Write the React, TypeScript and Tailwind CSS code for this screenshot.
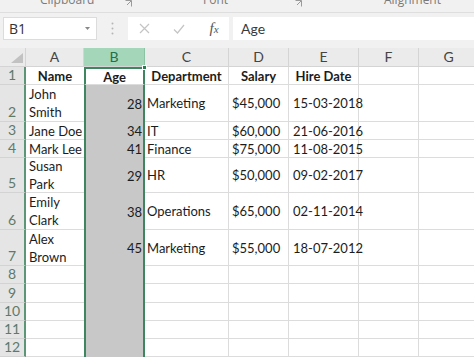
import React from "react";

const rowH = [
  "h-[18px]",
  "h-[37px]",
  "h-[18px]",
  "h-[18px]",
  "h-[35px]",
  "h-[37px]",
  "h-[36px]",
  "h-[18px]",
  "h-[19px]",
  "h-[18px]",
  "h-[18px]",
  "h-[18px]",
];

type Row = { a: string[]; b: string; c: string; d: string; e: string };
const data: Row[] = [
  { a: ["Name"], b: "Age", c: "Department", d: "Salary", e: "Hire Date" },
  { a: ["John", "Smith"], b: "28", c: "Marketing", d: "$45,000", e: "15-03-2018" },
  { a: ["Jane Doe"], b: "34", c: "IT", d: "$60,000", e: "21-06-2016" },
  { a: ["Mark Lee"], b: "41", c: "Finance", d: "$75,000", e: "11-08-2015" },
  { a: ["Susan", "Park"], b: "29", c: "HR", d: "$50,000", e: "09-02-2017" },
  { a: ["Emily", "Clark"], b: "38", c: "Operations", d: "$65,000", e: "02-11-2014" },
  { a: ["Alex", "Brown"], b: "45", c: "Marketing", d: "$55,000", e: "18-07-2012" },
];

function Launcher() {
  return (
    <svg width="7" height="7" viewBox="0 0 7 7" className="block">
      <path d="M0.5 0.5 H6.5 V6.5" fill="none" stroke="#9a9a9a" strokeWidth="1" />
      <path d="M2 5 L6 1" stroke="#9a9a9a" strokeWidth="1" />
    </svg>
  );
}

export default function App() {
  const rows = Array.from({ length: 12 }, (_, i) => i);
  return (
    <div className="w-[474px] h-[357px] overflow-hidden bg-[#f1f1f1] font-['Lato',sans-serif] text-[#1c1c1c]">
      {/* Ribbon group labels (clipped at the top as in the screenshot) */}
      <div className="h-[13px] flex items-end overflow-hidden border-b border-[#dedede] text-[12px] leading-[16px] text-[#7a7a7a] font-['Open_Sans',sans-serif]">
        <div className="w-[125px] shrink-0 pl-[40px] -translate-y-[4px]">Clipboard</div>
        <div className="w-[78px] shrink-0 pb-[5px]">
          <Launcher />
        </div>
        <div className="w-[92px] shrink-0 -translate-y-[4px]">Font</div>
        <div className="w-[89px] shrink-0 pb-[5px]">
          <Launcher />
        </div>
        <div className="shrink-0 -translate-y-[4px]">Alignment</div>
      </div>

      {/* Formula bar */}
      <div className="h-[35px] pt-[4px] flex items-start">
        <div className="ml-[3px] w-[94px] h-[23px] shrink-0 bg-white border border-[#dcdcdc] flex items-center justify-between pl-[5px] pr-[6px] text-[14px] text-[#333] font-['Open_Sans',sans-serif]">
          <span className="leading-none">B1</span>
          <svg width="5" height="3" viewBox="0 0 5 3">
            <path d="M0 0 H5 L2.5 3 Z" fill="#888" />
          </svg>
        </div>
        <div className="w-[31px] h-[23px] shrink-0 flex items-center justify-center">
          <svg width="3" height="13" viewBox="0 0 3 13">
            <circle cx="1.5" cy="1.5" r="1" fill="#b5b5b5" />
            <circle cx="1.5" cy="6.5" r="1" fill="#b5b5b5" />
            <circle cx="1.5" cy="11.5" r="1" fill="#b5b5b5" />
          </svg>
        </div>
        <div className="w-[101px] h-[23px] shrink-0 bg-white flex items-center">
          <div className="w-[30px] flex justify-center pl-[2px]">
            <svg width="11" height="11" viewBox="0 0 11 11">
              <path d="M1 1 L10 10 M10 1 L1 10" stroke="#c4c4c4" strokeWidth="1.2" />
            </svg>
          </div>
          <div className="w-[38px] flex justify-center pl-[4px]">
            <svg width="12" height="10" viewBox="0 0 12 10">
              <path d="M1 5.5 L4.5 9 L11 1" fill="none" stroke="#c4c4c4" strokeWidth="1.2" />
            </svg>
          </div>
          <div className="w-[30px] flex justify-center pl-[6px] font-['Liberation_Serif',serif] italic text-[#555] text-[15px] leading-none">
            <span>
              f<span className="text-[11px]">x</span>
            </span>
          </div>
        </div>
        <div className="w-[4px] shrink-0" />
        <div className="flex-1 h-[23px] bg-white flex items-center pl-[8px] text-[14px] text-[#3a3a3a]">Age</div>
      </div>

      {/* Column headers */}
      <div className="h-[19px] flex bg-[#ebebeb] border-b border-[#d4d4d4] text-[14px] text-[#444] leading-[18px]">
        <div className="w-[26px] shrink-0 relative border-r border-[#d4d4d4] flex items-end justify-end pr-[2px] pb-[3px]">
          <svg width="12" height="10" viewBox="0 0 12 10">
            <path d="M12 0 L12 10 L0 10 Z" fill="#c2c2c2" />
          </svg>
        </div>
        <div className="w-[58px] shrink-0 border-r border-[#d4d4d4] flex items-center justify-center">A</div>
        <div className="w-[61px] shrink-0 bg-[#a4d7ba] text-[#23704a] border-r border-[#8cc3a4] flex items-center justify-center">B</div>
        <div className="w-[84px] shrink-0 border-r border-[#d4d4d4] flex items-center justify-center">C</div>
        <div className="w-[60px] shrink-0 border-r border-[#d4d4d4] flex items-center justify-center">D</div>
        <div className="w-[70px] shrink-0 border-r border-[#d4d4d4] flex items-center justify-center">E</div>
        <div className="w-[60px] shrink-0 border-r border-[#d4d4d4] flex items-center justify-center">F</div>
        <div className="w-[60px] shrink-0 border-r border-[#d4d4d4] flex items-center justify-center">G</div>
      </div>

      {/* Rows */}
      <div className="bg-white text-[13px] leading-[18px]">
        {rows.map((i) => {
          const r = data[i];
          const header = i === 0;
          const bold = header ? "font-bold" : "";
          return (
            <div key={i} className={`flex ${rowH[i]}`}>
              <div className="w-[26px] shrink-0 bg-[#e5e5e5] border-r-2 border-r-[#5d9676] border-b border-b-[#d3d3d3] flex items-end justify-center text-[14px] text-[#5e7a69]">
                {i + 1}
              </div>
              {/* A */}
              <div className={`w-[58px] shrink-0 border-b border-[#dcdcdc] flex flex-col justify-center ${header ? "items-center" : "pl-[3px]"} ${bold} whitespace-nowrap`}>
                {r ? r.a.map((t) => <div key={t}>{t}</div>) : null}
              </div>
              {/* B */}
              <div
                className={`relative w-[61px] shrink-0 border-x-2 border-[#3f8660] flex items-center whitespace-nowrap ${
                  header ? "bg-white justify-center border-t-2 border-b border-b-[#dcdcdc] font-bold" : "bg-[#c8c8c8] justify-end pr-[1px]"
                }`}
              >
                {r ? r.b : null}
                {header ? (
                  <div className="absolute right-[-4px] top-[-4px] w-[5px] h-[5px] bg-[#2a7a50] border border-white" />
                ) : null}
              </div>
              {/* C */}
              <div className={`w-[84px] shrink-0 border-r border-b border-[#dcdcdc] flex items-center whitespace-nowrap ${header ? "justify-center" : "pl-[2px]"} ${bold}`}>
                {r ? r.c : null}
              </div>
              {/* D */}
              <div className={`w-[60px] shrink-0 border-r border-b border-[#dcdcdc] flex items-center whitespace-nowrap ${header ? "justify-center" : "pl-[3px]"} ${bold}`}>
                {r ? r.d : null}
              </div>
              {/* E */}
              <div className={`w-[70px] shrink-0 border-r border-b border-[#dcdcdc] flex items-center whitespace-nowrap ${header ? "justify-center" : "pl-[4px]"} ${bold}`}>
                {r ? r.e : null}
              </div>
              <div className="w-[60px] shrink-0 border-r border-b border-[#dcdcdc]" />
              <div className="w-[60px] shrink-0 border-r border-b border-[#dcdcdc]" />
            </div>
          );
        })}
      </div>
    </div>
  );
}
